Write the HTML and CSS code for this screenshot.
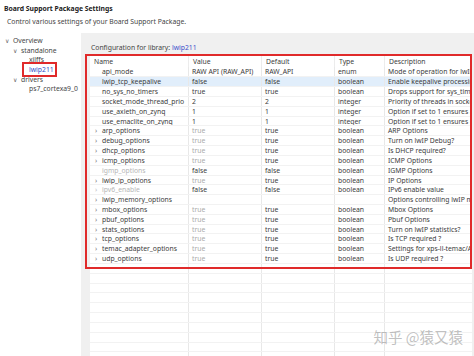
FILE: index.html
```html
<!DOCTYPE html>
<html>
<head>
	<title>Board Support Package Settings</title>
	<link rel="stylesheet" href="styles.css">
</head>
<body>
<div id="page">

	<div class="header">
		<h1>Board Support Package Settings</h1>
		<p class="sub">Control various settings of your Board Support Package.</p>
	</div>

	<div class="main">
		<div class="tree">
			<div class="node lvl0"><span class="chev">&#8744;</span>Overview</div>
			<div class="node lvl1"><span class="chev">&#8744;</span>standalone</div>
			<div class="node lvl2">xilffs</div>
			<div class="node lvl2 sel">lwip211</div>
			<div class="node lvl1"><span class="chev">&#8744;</span>drivers</div>
			<div class="node lvl2">ps7_cortexa9_0</div>
			<div class="mark"></div>
		</div>

		<div class="panel">
			<div class="cfg">Configuration for library: <span class="lib">lwip211</span></div>

			<div class="table">
				<div class="row head">
					<div class="c">Name</div><div class="c">Value</div><div class="c">Default</div><div class="c">Type</div><div class="c">Description</div>
				</div>
				<div class="row">
					<div class="c leaf">api_mode</div><div class="c">RAW API (RAW_API)</div><div class="c">RAW_API</div><div class="c">enum</div><div class="c">Mode of operation for lwIP (RAW API/Sockets API)</div>
				</div>
				<div class="row hl">
					<div class="c leaf">lwip_tcp_keepalive</div><div class="c">false</div><div class="c">false</div><div class="c">boolean</div><div class="c">Enable keepalive processing with default interval</div>
				</div>
				<div class="row">
					<div class="c leaf">no_sys_no_timers</div><div class="c">true</div><div class="c">true</div><div class="c">boolean</div><div class="c">Drops support for sys_timeout when NO_SYS==1</div>
				</div>
				<div class="row">
					<div class="c leaf">socket_mode_thread_prio</div><div class="c">2</div><div class="c">2</div><div class="c">integer</div><div class="c">Priority of threads in socket mode</div>
				</div>
				<div class="row">
					<div class="c leaf">use_axieth_on_zynq</div><div class="c">1</div><div class="c">1</div><div class="c">integer</div><div class="c">Option if set to 1 ensures axiethernet adapter</div>
				</div>
				<div class="row">
					<div class="c leaf">use_emaclite_on_zynq</div><div class="c">1</div><div class="c">1</div><div class="c">integer</div><div class="c">Option if set to 1 ensures emaclite adapter</div>
				</div>
				<div class="row">
					<div class="c grp">arp_options</div><div class="c dim">true</div><div class="c">true</div><div class="c">boolean</div><div class="c">ARP Options</div>
				</div>
				<div class="row">
					<div class="c grp">debug_options</div><div class="c dim">true</div><div class="c">true</div><div class="c">boolean</div><div class="c">Turn on lwIP Debug?</div>
				</div>
				<div class="row">
					<div class="c grp">dhcp_options</div><div class="c dim">true</div><div class="c">true</div><div class="c">boolean</div><div class="c">Is DHCP required?</div>
				</div>
				<div class="row">
					<div class="c grp">icmp_options</div><div class="c dim">true</div><div class="c">true</div><div class="c">boolean</div><div class="c">ICMP Options</div>
				</div>
				<div class="row">
					<div class="c leaf off">igmp_options</div><div class="c">false</div><div class="c">false</div><div class="c">boolean</div><div class="c">IGMP Options</div>
				</div>
				<div class="row">
					<div class="c grp">lwip_ip_options</div><div class="c dim">true</div><div class="c">true</div><div class="c">boolean</div><div class="c">IP Options</div>
				</div>
				<div class="row">
					<div class="c grp off">ipv6_enable</div><div class="c">false</div><div class="c">false</div><div class="c">boolean</div><div class="c">IPv6 enable value</div>
				</div>
				<div class="row">
					<div class="c grp">lwip_memory_options</div><div class="c"></div><div class="c"></div><div class="c"></div><div class="c">Options controlling lwIP memory usage</div>
				</div>
				<div class="row">
					<div class="c grp">mbox_options</div><div class="c dim">true</div><div class="c">true</div><div class="c">boolean</div><div class="c">Mbox Options</div>
				</div>
				<div class="row">
					<div class="c grp">pbuf_options</div><div class="c dim">true</div><div class="c">true</div><div class="c">boolean</div><div class="c">Pbuf Options</div>
				</div>
				<div class="row">
					<div class="c grp">stats_options</div><div class="c dim">true</div><div class="c">true</div><div class="c">boolean</div><div class="c">Turn on lwIP statistics?</div>
				</div>
				<div class="row">
					<div class="c grp">tcp_options</div><div class="c dim">true</div><div class="c">true</div><div class="c">boolean</div><div class="c">Is TCP required ?</div>
				</div>
				<div class="row">
					<div class="c grp">temac_adapter_options</div><div class="c dim">true</div><div class="c">true</div><div class="c">boolean</div><div class="c">Settings for xps-ll-temac/Axi-Ethernet</div>
				</div>
				<div class="row">
					<div class="c grp">udp_options</div><div class="c dim">true</div><div class="c">true</div><div class="c">boolean</div><div class="c">Is UDP required ?</div>
				</div>

				<div class="row empty"><div class="c"></div><div class="c"></div><div class="c"></div><div class="c"></div><div class="c"></div></div>
				<div class="row empty"><div class="c"></div><div class="c"></div><div class="c"></div><div class="c"></div><div class="c"></div></div>
				<div class="row empty"><div class="c"></div><div class="c"></div><div class="c"></div><div class="c"></div><div class="c"></div></div>
				<div class="row empty"><div class="c"></div><div class="c"></div><div class="c"></div><div class="c"></div><div class="c"></div></div>
				<div class="row empty"><div class="c"></div><div class="c"></div><div class="c"></div><div class="c"></div><div class="c"></div></div>
				<div class="row empty"><div class="c"></div><div class="c"></div><div class="c"></div><div class="c"></div><div class="c"></div></div>
				<div class="row empty"><div class="c"></div><div class="c"></div><div class="c"></div><div class="c"></div><div class="c"></div></div>
				<div class="row empty"><div class="c"></div><div class="c"></div><div class="c"></div><div class="c"></div><div class="c"></div></div>
				<div class="row empty"><div class="c"></div><div class="c"></div><div class="c"></div><div class="c"></div><div class="c"></div></div>
				<div class="row empty"><div class="c"></div><div class="c"></div><div class="c"></div><div class="c"></div><div class="c"></div></div>

				<div class="box"></div>
			</div>
		</div>
	</div>

	<div class="watermark">知乎 @猿又猿</div>
</div>
</body>
</html>
```

FILE: styles.css
```css
body {
	margin: 0;
	background: #fff;
	font-family: "Noto Sans", sans-serif;
	font-size: 6.8px;
	color: #3a3a3a;
}

#page {
	position: relative;
	width: 474px;
	height: 356px;
	overflow: hidden;
}

.header {
	height: 33px;
	padding: 4px 0 0 4px;
	box-sizing: border-box;
}
h1 {
	margin: 0;
	font-size: 6.8px;
	font-weight: bold;
	color: #222;
	line-height: 10px;
}
.sub {
	margin: 3px 0 0 3px;
	line-height: 9px;
	color: #444;
}

.main {
	display: flex;
	height: 323px;
}

/* left tree */
.tree {
	position: relative;
	width: 81px;
	flex: none;
	padding-top: 3px;
	background: #fff;
}
.node {
	height: 9.7px;
	line-height: 9.7px;
	white-space: nowrap;
	color: #444;
}
.lvl0 { padding-left: 5px; }
.lvl1 { padding-left: 13px; }
.lvl2 { padding-left: 29px; }
.chev {
	display: inline-block;
	width: 8px;
	font-size: 6px;
	color: #666;
}
.sel {
	color: #2f4fc8;
}
.mark {
	position: absolute;
	left: 22px;
	top: 29px;
	width: 31px;
	height: 11px;
	border: 2px solid #e02a2a;
}

/* right panel */
.panel {
	flex: 1;
	background: #f0f0f0;
	padding: 10px 2px 0 9px;
}
.cfg {
	margin-left: 1px;
	height: 13px;
	line-height: 10px;
	color: #444;
}
.lib {
	color: #3b4fcc;
}

.table {
	position: relative;
	background: #fff;
}
.row {
	display: grid;
	grid-template-columns: 99px 73px 73px 50px 1fr;
	height: 9.83px;
	line-height: 9.83px;
	border-bottom: 1px solid #f2f2f2;
	box-sizing: border-box;
}
.row.head {
	height: 11.4px;
	line-height: 11.4px;
	border-bottom: none;
}
.c {
	padding-left: 3px;
	border-right: 1px solid #e8e8e8;
	white-space: nowrap;
	overflow: hidden;
}
.c:last-child {
	border-right: none;
}
.row.head .c {
	padding-left: 4px;
	border-right-color: #ececec;
}
.hl {
	background: #e1eefb;
}
.c.leaf {
	padding-left: 12px;
}
.c.grp {
	padding-left: 5px;
}
.c.grp::before {
	content: "\203A";
	display: inline-block;
	width: 7px;
	color: #777;
}
.off {
	color: #b5b5b5;
}
.off.grp::before {
	color: #bbb;
}
.dim {
	color: #a9a9a9;
}

.box {
	position: absolute;
	left: -5px;
	top: -2px;
	width: 383px;
	height: 211px;
	border: 2px solid #e02a2a;
}

.watermark {
	position: absolute;
	right: 11px;
	bottom: 9px;
	font-family: "Noto Sans CJK SC", sans-serif;
	font-size: 14.5px;
	color: rgba(140, 140, 140, 0.55);
}
```
